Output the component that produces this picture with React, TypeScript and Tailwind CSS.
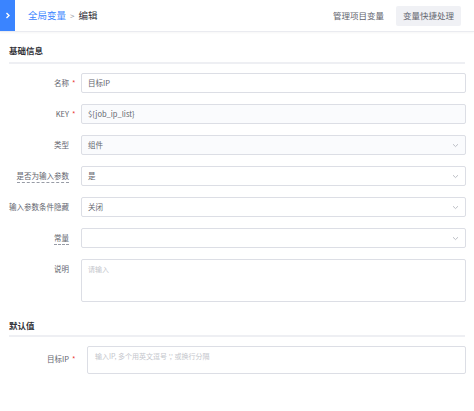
import React from "react";

const font = { fontFamily: '"Noto Sans CJK SC", "Noto Sans", sans-serif' };

function Chevron() {
  return (
    <svg width="7" height="5" viewBox="0 0 7 5" className="shrink-0">
      <path d="M1 1.2 L3.5 3.6 L6 1.2" fill="none" stroke="#b5b8c0" strokeWidth="0.9" />
    </svg>
  );
}

function Label({ text, required, dashed }: { text: string; required?: boolean; dashed?: boolean }) {
  return (
    <div className="w-[60px] shrink-0 flex justify-end">
      <span className="relative text-[7.5px] leading-[10px] text-[#63656e]">
        <span className={dashed ? "border-b border-dashed border-[#979ba5] pb-[1px]" : ""}>{text}</span>
        {required && <span className="absolute left-[calc(100%+3px)] top-[0px] text-[#ea3636]">*</span>}
      </span>
    </div>
  );
}

function Field({
  label,
  required,
  dashed,
  value,
  placeholder,
  select,
  gray,
}: {
  label: string;
  required?: boolean;
  dashed?: boolean;
  value?: string;
  placeholder?: string;
  select?: boolean;
  gray?: boolean;
}) {
  return (
    <div className="flex items-center">
      <Label text={label} required={required} dashed={dashed} />
      <div
        className={`ml-[12px] flex-1 h-[20px] border border-[#dcdee5] rounded-[2px] flex items-center pl-[6px] pr-[6px] ${
          gray ? "bg-[#fafbfd]" : "bg-white"
        }`}
      >
        <span className={`flex-1 text-[7.5px] leading-[10px] ${value ? "text-[#63656e]" : "text-[#c4c6cc]"}`}>{value ?? placeholder}</span>
        {select && <Chevron />}
      </div>
    </div>
  );
}

export default function App() {
  return (
    <div className="w-[474px] h-[411px] bg-white overflow-hidden" style={font}>
      <div className="h-[32px] flex items-center border-b border-[#eaebf0] shadow-[0_1px_2px_rgba(0,0,0,0.04)]">
        <div className="w-[15px] h-full bg-[#3a84ff] flex items-center justify-center">
          <svg width="6" height="7" viewBox="0 0 6 7">
            <path d="M1.5 1 L4 3.5 L1.5 6" fill="none" stroke="white" strokeWidth="1.4" />
          </svg>
        </div>
        <div className="ml-[13px] flex items-center text-[9.5px]">
          <span className="text-[#3a84ff]">全局变量</span>
          <span className="mx-[4px] text-[#979ba5] text-[8px]">&gt;</span>
          <span className="text-[#313238]">编辑</span>
        </div>
        <div className="ml-auto flex items-center text-[8.5px] text-[#63656e]">
          <span className="mr-[12px]">管理项目变量</span>
          <div className="h-[20px] px-[7px] bg-[#f0f1f5] rounded-[2px] flex items-center mr-[13px]">变量快捷处理</div>
        </div>
      </div>

      <div className="pl-[9px] pr-[8px]">
        <div className="pt-[12px] text-[8.5px] font-bold text-[#313238] leading-[12px]">基础信息</div>
        <div className="mt-[6px] h-[2px] bg-[#eeeff3] mr-[1px]" />
        <div className="mt-[9px] flex flex-col gap-[11px]">
          <Field label="名称" required value="目标IP" />
          <Field label="KEY" required value="${job_ip_list}" gray />
          <Field label="类型" value="组件" select gray />
          <Field label="是否为输入参数" dashed value="是" select />
          <Field label="输入参数条件隐藏" value="关闭" select />
          <Field label="常量" dashed select />
          <div className="flex items-start">
            <div className="pt-[5px]">
              <Label text="说明" />
            </div>
            <div className="ml-[12px] flex-1 h-[43px] border border-[#dcdee5] rounded-[2px] px-[6px] pt-[4px] text-[7px] leading-[10px] text-[#c4c6cc]">
              请输入
            </div>
          </div>
        </div>

        <div className="mt-[17px] text-[8.5px] font-bold text-[#313238] leading-[12px]">默认值</div>
        <div className="mt-[4px] h-[2px] bg-[#eeeff3] mr-[1px]" />
        <div className="mt-[9px] flex items-start">
          <div className="pt-[8px]">
            <Label text="目标IP" required />
          </div>
          <div className="ml-[18px] flex-1 h-[28px] border border-[#dcdee5] rounded-[2px] px-[7px] pt-[4px] text-[7px] leading-[10px] text-[#c4c6cc]">
            输入IP, 多个用英文逗号 ',' 或换行分隔
          </div>
        </div>
      </div>
    </div>
  );
}
